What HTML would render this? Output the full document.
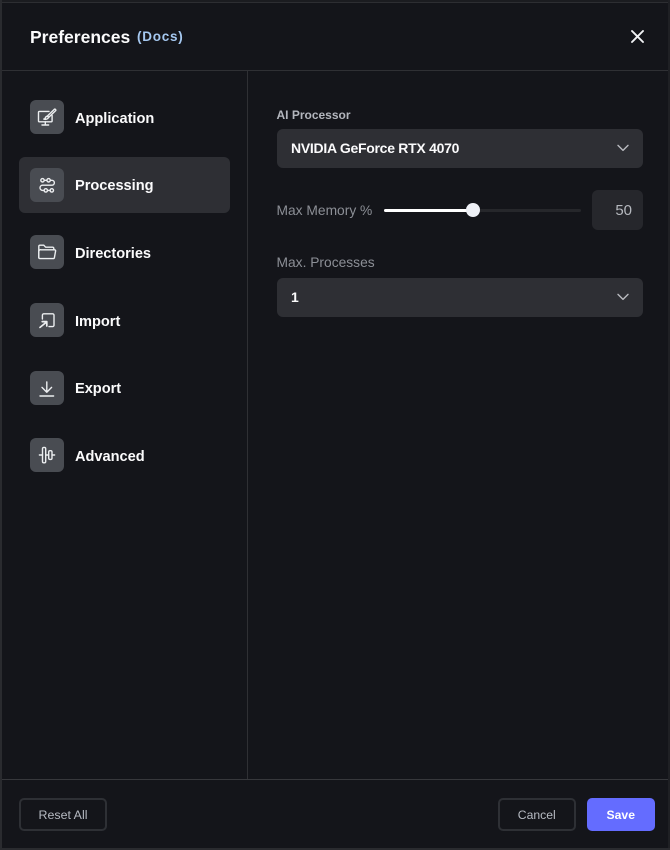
<!DOCTYPE html>
<html><head><meta charset="utf-8">
<style>
html,body{margin:0;padding:0;width:670px;height:850px;overflow:hidden;background:#14151a;}
body{position:relative;font-family:"Liberation Sans",sans-serif;color:#fff;}
.a{position:absolute;white-space:nowrap;}
.tile{position:absolute;left:30px;width:34px;height:34px;border-radius:6px;background:#494c52;}
.tile svg{position:absolute;left:6px;top:6px;width:22px;height:22px;fill:none;stroke:#eceef0;stroke-width:1.4;stroke-linecap:round;stroke-linejoin:round;}
.nav{left:75px;font-size:14.6px;font-weight:700;line-height:18px;color:#fbfbfc;letter-spacing:-.02px;}
.sel{position:absolute;left:276.5px;width:366.5px;background:#2e2f34;border-radius:6px;}
.chev{position:absolute;left:616px;width:14px;height:8px;fill:none;stroke:#b9bbc0;stroke-width:1.4;stroke-linecap:round;stroke-linejoin:round;}
.btn{position:absolute;top:798px;height:33px;box-sizing:border-box;border:2px solid #2e3035;border-radius:5px;font-size:12.4px;line-height:30px;text-align:center;color:#b6bac2;}
</style></head><body>
<div class="a" style="left:0;top:0;width:670px;height:2px;background:#1b1c20"></div>
<div class="a" style="left:0;top:2px;width:670px;height:1px;background:#2d2e32"></div>
<div class="a" style="left:0;top:0;width:2px;height:850px;background:#2a2b2f"></div>
<div class="a" style="left:668px;top:0;width:2px;height:850px;background:#1f2024"></div>
<div class="a" style="left:0;top:848px;width:670px;height:2px;background:#2a2b2f"></div>
<div class="a" style="left:2px;top:70px;width:666px;height:1px;background:#2f3034"></div>
<div class="a" style="left:247px;top:71px;width:1px;height:708px;background:#2f3034"></div>
<div class="a" style="left:2px;top:779px;width:666px;height:1px;background:#37383c"></div>

<div class="a" style="left:30px;top:25.5px;font-size:17.5px;font-weight:700;line-height:22px;color:#fbfbfc">Preferences</div>
<div class="a" style="left:137px;top:28px;font-size:13.5px;font-weight:700;line-height:18px;letter-spacing:.75px;color:#a5c8f0">(Docs)</div>
<svg class="a" style="left:630px;top:29px" width="15" height="15" viewBox="0 0 15 15" fill="none" stroke="#f2f3f5" stroke-width="1.9" stroke-linecap="round"><path d="M2 2 13 13M13 2 2 13"/></svg>

<div class="a" style="left:19px;top:156.5px;width:211px;height:56px;border-radius:6px;background:#2e2f34"></div>

<div class="tile" style="top:100px"><svg viewBox="0 0 22 22"><path d="M13 5.4H3.4a.9.9 0 0 0-.9.9v8.6a.9.9 0 0 0 .9.9h11.8a.9.9 0 0 0 .9-.9V9.5"/><path d="M9.3 15.8v3M6 19h6.6"/><path d="M18.4 3.2 11.4 10l1.4 1.3 7-6.8c.4-.7-.8-1.8-1.4-1.3z"/><path d="M11.2 10.2c-1 .3-1.8 1-2 2-.2.5-.8.8-1.4.9 1.6.5 3.6.1 4.8-1.6"/></svg></div>
<div class="a nav" style="top:110px">Application</div>

<div class="tile" style="top:167.5px"><svg viewBox="0 0 22 22"><circle cx="6.5" cy="6.3" r="1.7"/><circle cx="12.6" cy="6.3" r="1.7"/><circle cx="9.8" cy="16.4" r="1.7"/><circle cx="15.8" cy="16.4" r="1.7"/><path d="M8.2 6.3h2.7M14.3 6.3h1.6a2.45 2.45 0 0 1 0 4.9H6.6a2.6 2.6 0 0 0 0 5.2h1.5M11.5 16.4h2.6"/></svg></div>
<div class="a nav" style="top:177px">Processing</div>

<div class="tile" style="top:235px"><svg viewBox="0 0 22 22"><path d="M2.8 16.8V5.4a1.2 1.2 0 0 1 1.2-1.2h3.8l1.8 2h7a1.2 1.2 0 0 1 1.2 1.2v1.2"/><path d="M5.2 8.8h13.4a1 1 0 0 1 1 1.2l-1.2 6.6a1.2 1.2 0 0 1-1.2 1H4a1.2 1.2 0 0 1-1.2-1.2V10.6a1.8 1.8 0 0 1 2.4-1.8z"/></svg></div>
<div class="a nav" style="top:244.5px">Directories</div>

<div class="tile" style="top:303px"><svg viewBox="0 0 22 22"><path d="M6.4 10V6.2a1.4 1.4 0 0 1 1.4-1.4h8.8a1.4 1.4 0 0 1 1.4 1.4v10a1.4 1.4 0 0 1-1.4 1.4H13"/><path d="M4 18.4 10.6 13M6.2 12.6h4.6V17" stroke-width="1.7"/></svg></div>
<div class="a nav" style="top:312.5px">Import</div>

<div class="tile" style="top:370.5px"><svg viewBox="0 0 22 22"><path d="M10.8 5v10M6 10.4l4.8 4.8 4.8-4.8M4 19h13.6"/></svg></div>
<div class="a nav" style="top:380px">Export</div>

<div class="tile" style="top:438px"><svg viewBox="0 0 22 22"><rect x="6.5" y="3.4" width="3.2" height="15.4" rx="1.3"/><rect x="12.7" y="6.7" width="3.3" height="8.7" rx="1.3"/><path d="M3.4 11h3.1M9.7 11h3M16 11h2.6"/></svg></div>
<div class="a nav" style="top:447.5px">Advanced</div>

<div class="a" style="left:276.5px;top:107px;font-size:12px;font-weight:700;line-height:16px;color:#b3b6bd">AI Processor</div>
<div class="sel" style="top:129px;height:38.5px"></div>
<div class="a" style="left:291px;top:138.5px;font-size:14px;letter-spacing:-.28px;font-weight:700;line-height:18px;color:#fbfbfc">NVIDIA GeForce RTX 4070</div>
<svg class="chev" style="top:144px" viewBox="0 0 14 8"><path d="M2 1.4 7 6.4l5-5"/></svg>

<div class="a" style="left:276.5px;top:202px;font-size:13.8px;line-height:18px;color:#8c8f96">Max Memory %</div>
<div class="a" style="left:384px;top:208.5px;width:197px;height:3px;border-radius:2px;background:#26272b"></div>
<div class="a" style="left:384px;top:208.5px;width:89px;height:3px;border-radius:2px;background:#fff"></div>
<div class="a" style="left:466px;top:202.5px;width:14px;height:14px;border-radius:50%;background:#eef0f6"></div>
<div class="a" style="left:592px;top:190px;width:51px;height:39.5px;border-radius:6px;background:#26272c"></div>
<div class="a" style="left:592px;top:202px;width:40px;text-align:right;font-size:15px;line-height:18px;color:#b5b8be">50</div>

<div class="a" style="left:276.5px;top:254px;font-size:13.8px;line-height:18px;color:#8c8f96">Max. Processes</div>
<div class="sel" style="top:277.5px;height:39px"></div>
<div class="a" style="left:291px;top:288px;font-size:14px;font-weight:700;line-height:18px;color:#fbfbfc">1</div>
<svg class="chev" style="top:293px" viewBox="0 0 14 8"><path d="M2 1.4 7 6.4l5-5"/></svg>

<div class="btn" style="left:19px;width:88px">Reset All</div>
<div class="btn" style="left:498px;width:77.5px;font-size:12.2px">Cancel</div>
<div class="btn" style="left:587px;width:67.5px;border:0;background:#646cff;color:#fff;font-weight:700;line-height:34px;border-radius:5px;font-size:12.2px">Save</div>
</body></html>
